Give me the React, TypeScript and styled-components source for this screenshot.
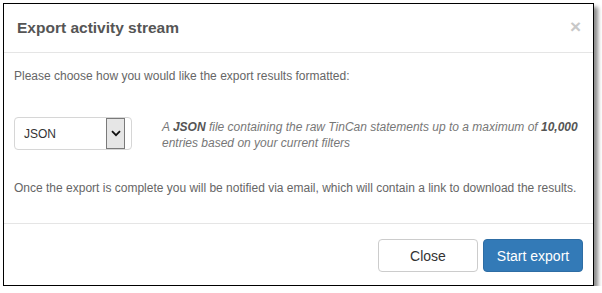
import React from "react";
import styled, { createGlobalStyle } from "styled-components";

const Global = createGlobalStyle`
  html, body { margin: 0; padding: 0; background: #fff; }
  body { font-family: "Liberation Sans", Arial, sans-serif; }
`;

const Frame = styled.div`
  margin: 3px 0 0 3px;
  width: 589px;
  height: 281px;
  border: 1px solid #000;
  background: #fff;
  box-shadow: 4px 4px 4px rgba(0, 0, 0, 0.45);
  display: flex;
  flex-direction: column;
`;

const Header = styled.div`
  height: 49px;
  border-bottom: 1px solid #e5e5e5;
  display: flex;
  align-items: center;
  justify-content: space-between;
  padding: 0 12px 0 13px;
  box-sizing: border-box;
  flex: none;
`;

const Title = styled.h4`
  margin: 0 0 1px 0;
  font-size: 15.5px;
  font-weight: bold;
  color: #555;
`;

const CloseX = styled.span`
  font-size: 19px;
  font-weight: bold;
  color: #c8c8c8;
  line-height: 1;
  margin-top: -4px;
`;

const Body = styled.div`
  flex: 1;
  padding: 15px 10px 0 10px;
  border-bottom: 1px solid #e5e5e5;
  color: #666;
  font-size: 12px;
`;

const Para = styled.p`
  margin: 0;
  line-height: 17px;
`;

const FormatRow = styled.div`
  display: flex;
  align-items: flex-start;
  margin-top: 32px;
  gap: 30px;
`;

const Select = styled.div`
  width: 118px;
  height: 33px;
  box-sizing: border-box;
  border: 1px solid #d6d6d6;
  border-radius: 4px;
  display: flex;
  align-items: center;
  justify-content: space-between;
  padding: 0 6px 0 9px;
  color: #333;
  font-size: 12px;
  flex: none;
`;

const ArrowBox = styled.div`
  width: 19px;
  height: 31px;
  box-sizing: border-box;
  border: 1px solid #7a7a7a;
  background: #e6e6e6;
  display: flex;
  align-items: center;
  justify-content: center;
`;

const Desc = styled.p`
  margin: 2px 0 0 0;
  font-style: italic;
  color: #777;
  line-height: 16px;
  font-size: 12px;
  b { color: #555; }
`;

const Notice = styled(Para)`
  margin-top: 29px;
`;

const Footer = styled.div`
  flex: none;
  height: 61px;
  box-sizing: border-box;
  padding: 15px 10px 0 0;
  display: flex;
  justify-content: flex-end;
  gap: 5px;
`;

const Button = styled.button<{ $primary?: boolean }>`
  width: 100px;
  height: 33px;
  border-radius: 4px;
  font-family: "Liberation Sans", Arial, sans-serif;
  font-size: 14px;
  cursor: pointer;
  border: 1px solid ${(p) => (p.$primary ? "#2e6da4" : "#ccc")};
  background: ${(p) => (p.$primary ? "#337ab7" : "#fff")};
  color: ${(p) => (p.$primary ? "#fff" : "#333")};
`;

export default function App() {
  return (
    <>
      <Global />
      <Frame>
        <Header>
          <Title>Export activity stream</Title>
          <CloseX>×</CloseX>
        </Header>
        <Body>
          <Para>Please choose how you would like the export results formatted:</Para>
          <FormatRow>
            <Select>
              <span>JSON</span>
              <ArrowBox>
                <svg width="10" height="7" viewBox="0 0 10 7">
                  <path d="M1 1.2 L5 5.2 L9 1.2" stroke="#111" strokeWidth="1.8" fill="none" />
                </svg>
              </ArrowBox>
            </Select>
            <Desc>
              A <b>JSON</b> file containing the raw TinCan statements up to a maximum of <b>10,000</b>
              <br />
              entries based on your current filters
            </Desc>
          </FormatRow>
          <Notice>
            Once the export is complete you will be notified via email, which will contain a link to download the results.
          </Notice>
        </Body>
        <Footer>
          <Button>Close</Button>
          <Button $primary>Start export</Button>
        </Footer>
      </Frame>
    </>
  );
}
